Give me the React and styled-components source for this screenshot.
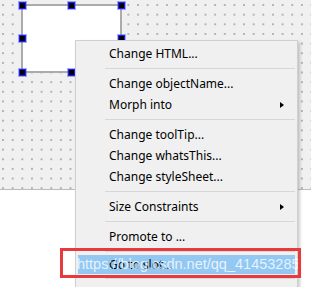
import React from 'react'
import styled, { createGlobalStyle } from 'styled-components'

const GlobalStyle = createGlobalStyle`
  html, body {
    margin: 0;
    padding: 0;
    background: #fff;
    overflow: hidden;
  }
  body {
    font-family: 'Noto Sans', 'Liberation Sans', sans-serif;
  }
`

const Page = styled.div`
  position: relative;
  width: 311px;
  height: 287px;
  overflow: hidden;
  background: #fff;
`

const FormCanvas = styled.div`
  position: relative;
  height: 189px;
  border-bottom: 1px solid #bcbcbc;
  background-color: #f0f0f0;
  background-image: radial-gradient(circle, #b2b2b2 0.7px, transparent 1.1px);
  background-size: 9.65px 9.65px;
  background-position: -1.8px 0.2px;
`

const Selection = styled.div`
  position: absolute;
  left: 21px;
  top: 4px;
  width: 101px;
  height: 69px;
`

const WidgetBody = styled.div`
  width: 100%;
  height: 100%;
  box-sizing: border-box;
  background: #fff;
  border: 2px solid #ababab;
`

const Handle = styled.div`
  position: absolute;
  width: 7px;
  height: 7px;
  box-sizing: border-box;
  background: #000;
  border: 1px solid #1a1aff;
  box-shadow: 0 0 0 1px rgba(70, 70, 255, 0.45);
`

const Menu = styled.div`
  position: absolute;
  left: 75px;
  top: 40px;
  width: 223px;
  box-sizing: border-box;
  padding: 2px 2px 20px;
  background: #f0f0f0;
  border: 1px solid #cfcfcf;
  box-shadow: 2px 2px 3px rgba(0, 0, 0, 0.2);
  font-size: 12px;
  color: #000;
`

const Item = styled.div`
  display: flex;
  align-items: center;
  justify-content: space-between;
  height: ${({ $active }) => ($active ? '19px' : '21px')};
  margin-top: ${({ $active }) => ($active ? '-1px' : '0')};
  padding: 0 11px 0 31px;
  background: ${({ $active }) => ($active ? '#93c8f3' : 'transparent')};
  white-space: nowrap;
`

const Arrow = styled.span`
  width: 0;
  height: 0;
  border-top: 3.5px solid transparent;
  border-bottom: 3.5px solid transparent;
  border-left: 4px solid #000;
`

const Separator = styled.div`
  display: flex;
  align-items: center;
  height: 9px;

  &::before {
    content: '';
    flex: 1;
    height: 1px;
    margin: 0 0 0 27px;
    background: #d7d7d7;
  }
`

const Watermark = styled.div`
  position: absolute;
  left: 77px;
  top: 256px;
  font-family: 'Liberation Sans', Arial, sans-serif;
  font-size: 14.5px;
  line-height: 17px;
  color: rgba(255, 255, 255, 0.78);
  white-space: nowrap;
`

const Callout = styled.div`
  position: absolute;
  left: 60px;
  top: 248px;
  width: 241px;
  height: 30px;
  box-sizing: border-box;
  border: 3px solid #e63a3e;
`

const handles = [
  [1, 1], [50, 1], [100, 1],
  [1, 34.5], [100, 34.5],
  [1, 68], [50, 68], [100, 68],
]

const entries = [
  { label: 'Change HTML...' },
  { sep: true },
  { label: 'Change objectName...' },
  { label: 'Morph into', sub: true },
  { sep: true },
  { label: 'Change toolTip...' },
  { label: 'Change whatsThis...' },
  { label: 'Change styleSheet...' },
  { sep: true },
  { label: 'Size Constraints', sub: true },
  { sep: true },
  { label: 'Promote to ...' },
  { sep: true },
  { label: 'Go to slot...', active: true },
  { sep: true },
]

const App = () => {
  return (
    <Page>
      <GlobalStyle />
      <FormCanvas>
        <Selection>
          <WidgetBody />
          {handles.map(([x, y], i) => (
            <Handle key={i} style={{ left: x - 3.5, top: y - 3.5 }} />
          ))}
        </Selection>
      </FormCanvas>
      <Menu>
        {entries.map((e, i) =>
          e.sep ? (
            <Separator key={i} />
          ) : (
            <Item key={i} $active={e.active}>
              <span>{e.label}</span>
              {e.sub && <Arrow />}
            </Item>
          )
        )}
      </Menu>
      <Watermark>https://blog.csdn.net/qq_41453285</Watermark>
      <Callout />
    </Page>
  )
}

export default App
